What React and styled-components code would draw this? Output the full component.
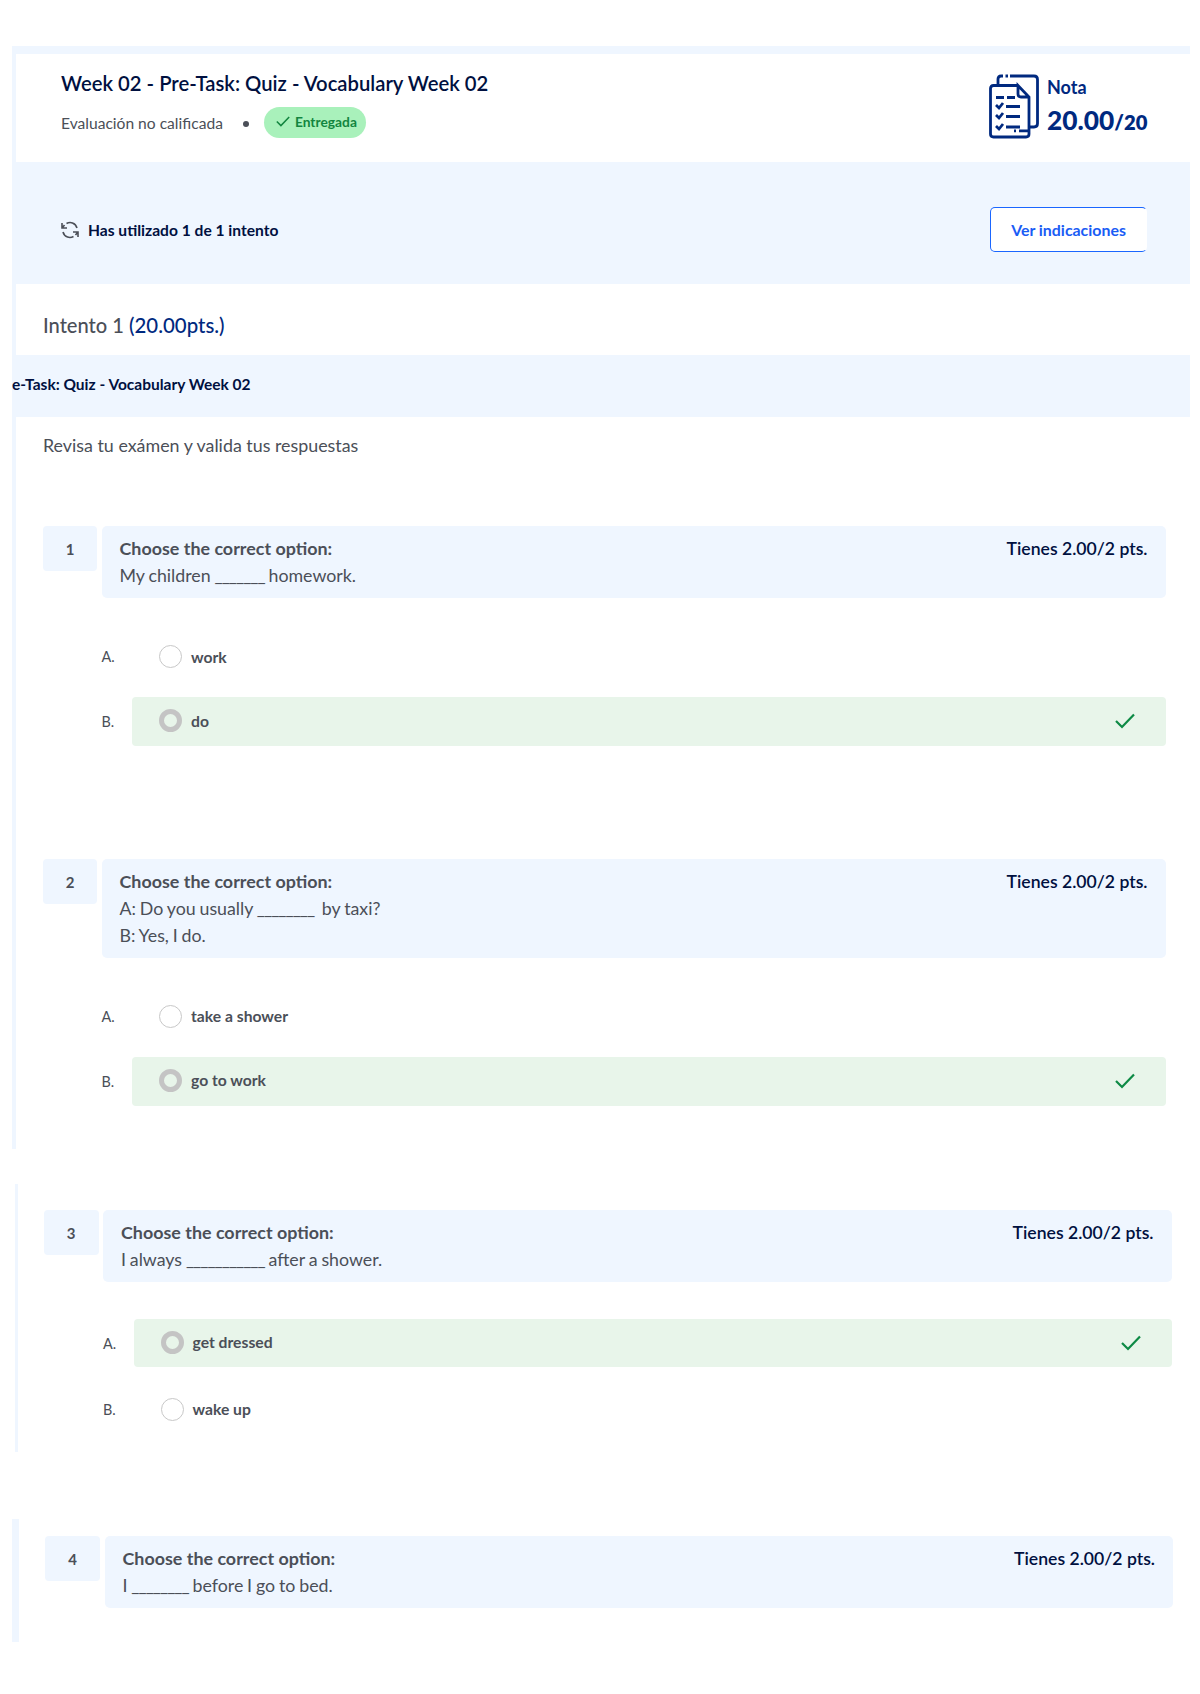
import React from 'react'
import styled, { createGlobalStyle } from 'styled-components'

const GlobalStyle = createGlobalStyle`
* { box-sizing: border-box; }
body {
  margin: 0;
  background: #ffffff;
  font-family: Lato, "Liberation Sans", sans-serif;
  color: #4b4f58;
}
h1, h2, p { margin: 0; font-weight: 400; }
`

const Page = styled.main`
width: 1200px;
height: 1694px;
padding-top: 46px;
overflow: hidden;
`

const Sheet = styled.section`
width: ${p => p.$width}px;
height: ${p => p.$height}px;
margin-left: ${p => p.$left}px;
margin-bottom: ${p => p.$after}px;
border-left: ${p => p.$edge}px solid #eff6ff;
`

const Header = styled.header`
display: flex;
justify-content: space-between;
height: 116px;
padding: 14px 43px 0 45px;
border-top: 8px solid #eff6ff;
background: white;
`

const Title = styled.h1`
font-size: 20.25px;
line-height: 30px;
font-weight: 600;
color: #00103f;
white-space: nowrap;
`

const Meta = styled.div`
display: flex;
align-items: center;
height: 31px;
margin-top: 9px;
font-size: 15.6px;
white-space: nowrap;
`

const Dot = styled.span`
width: 6px;
height: 6px;
margin: 2px 15px 0 20px;
border-radius: 50%;
background: #4b4f58;
`

const Badge = styled.span`
display: flex;
align-items: center;
gap: 5px;
width: 102px;
height: 31px;
padding: 0 0 2px 12px;
border-radius: 16px;
background: #a9f1bb;
color: #12853f;
font-size: 13.8px;
font-weight: 700;
`

const Score = styled.div`
display: flex;
gap: 8px;
margin-top: 6px;
color: #00297f;
white-space: nowrap;
`

const ScoreText = styled.div`
width: 100px;
padding-top: 1px;
font-size: 18px;
font-weight: 700;
line-height: 24px;
`

const ScoreValue = styled.div`
font-size: 20.2px;
font-weight: 800;
line-height: 32px;
margin-top: 5px;

strong {
  font-size: 26.3px;
  font-weight: 900;
}
`

const Attempts = styled.div`
display: flex;
align-items: center;
justify-content: space-between;
height: 122px;
padding: 13px 43px 0 45px;
background: #eff6ff;
`

const AttemptsText = styled.div`
display: flex;
align-items: center;
gap: 9px;
font-size: 15.6px;
font-weight: 700;
color: #00103f;
`

const OutlineButton = styled.button`
width: 157px;
height: 45px;
padding: 0;
border: 1.5px solid #1a66ff;
border-right-color: transparent;
border-radius: 5px;
background: white;
color: #1a5cf5;
font-family: inherit;
font-size: 15.9px;
font-weight: 700;
`

const AttemptTitle = styled.h2`
height: 71px;
padding: 12px 0 0 27px;
font-size: 20.1px;
font-weight: 500;
line-height: 58px;

span {
  color: #00297f;
  font-size: 20.4px;
}
`

const Crumb = styled.div`
height: 62px;
margin-left: -4px;
background: #eff6ff;
color: #00103f;
font-size: 15.5px;
font-weight: 700;
line-height: 59px;
white-space: nowrap;
`

const Intro = styled.p`
height: 109px;
padding: 13px 0 0 27px;
font-size: 17.850px;
line-height: 30px;
`

const Question = styled.article`
display: flex;
gap: 4.5px;
margin-left: ${p => p.$left}px;
padding-top: ${p => p.$top || 0}px;
`

const Number = styled.div`
flex: none;
width: ${p => p.$width || 54}px;
height: 45px;
border-radius: 4px;
background: #eff6ff;
font-size: 15px;
font-weight: 700;
line-height: 46px;
text-align: center;
`

const QuestionBody = styled.div`
width: ${p => p.$width}px;
`

const Prompt = styled.div`
display: flex;
justify-content: space-between;
height: ${p => p.$height}px;
padding: 9px 18px 0;
border-radius: 5px;
background: #eff6ff;
font-size: 17.8px;
line-height: 27px;
white-space: pre;

b {
  font-size: 17.9px;
  font-weight: 700;
}
p { word-spacing: -0.7px; }
`

const Blank = styled.span`
letter-spacing: -1px;
`

const Points = styled.div`
color: #00103f;
font-size: 17.6px;
font-weight: 600;
`

const Option = styled.div`
display: flex;
align-items: center;
height: ${p => p.$height}px;
margin-top: ${p => p.$gap}px;
font-size: 14.4px;
`

const Letter = styled.span`
width: 30.5px;
`

const Answer = styled.div`
flex: 1;
display: flex;
align-items: center;
height: 100%;
padding: 0 31px ${p => (p.$correct ? 2 : 0)}px 27px;
border-radius: 4px;
background: ${p => (p.$correct ? '#e8f5ea' : 'transparent')};
font-size: 15.7px;
font-weight: 700;

svg {
  margin-left: auto;
  margin-top: 1px;
}
`

const Radio = styled.span`
width: 23px;
height: 23px;
margin-right: 9px;
border: ${p => (p.$checked ? '5.5px solid #c4c4c4' : '1px solid #c8c8c8')};
border-radius: 50%;
`

function Tick({ width = 20, height = 16, color = '#0d8a45' }) {
  return (
    <svg width={width} height={height} viewBox="0 0 20 16" fill="none" stroke={color} strokeWidth="2.200">
      <path d="M1 8 7 14 19 1.500" />
    </svg>
  )
}

function RefreshIcon() {
  return (
    <svg width="18" height="18" viewBox="0 0 18 18" fill="none" stroke="#4b4f58" strokeWidth="1.600">
      <path d="M1 2v5h5M1.500 6.500 3.500 4M5.500 2.500C9 .500 14.500 1.500 16 7" />
      <path d="M17 16v-5h-5M16.500 11.500 14.500 14M12.500 15.500C9 17.500 3.500 16.500 2 11" />
    </svg>
  )
}

function PapersIcon() {
  return (
    <svg width="50" height="65" viewBox="0 0 50 65" fill="none" stroke="#00297f" strokeWidth="2.800">
      <path d="M9 11V5q0-3 3-3h2M16.500 2h2.500M21 2h24q3.500 0 3.500 3.500V49.500q0 3.500-3.500 3.500h-4" />
      <path d="M29 11.500H4.500q-3 0-3 3V60q0 3 3 3h32.500q3 0 3-3V23L29 11.500V20q0 3 3 3h8" />
      <path d="M7 23.500h8M18 23.500h8M17 32.500h14M17 42.500h14M17 53h14M25 56.800h2M30 56.800h10" />
      <path d="m7 31 3 3 4-5M7 41l3 3 4-5M7 52l3 3 4-5" />
    </svg>
  )
}

const questions = [
  {
    lines: ['My children _______ homework.'],
    options: [['work', false, 34], ['do', true, 16]],
  },
  {
    lines: ['A: Do you usually ________  by taxi?', 'B: Yes, I do.'],
    options: [['take a shower', false, 34], ['go to work', true, 16]],
  },
  {
    lines: ['I always ___________ after a shower.'],
    options: [['get dressed', true, 37], ['wake up', false, 18]],
    optionHeight: 48,
  },
  {
    lines: ['I ________ before I go to bed.'],
    options: [],
  },
]

// underscores are set tighter so that they join into one rule
function Line({ text }) {
  return (
    <p>
      {text.split(/(_+)/).map((part, i) => (
        part[0] === '_' ? <Blank key={i}>{part}</Blank> : part
      ))}
    </p>
  )
}

function QuestionItem({ index, left, top, width, numberWidth }) {
  const { lines, options, optionHeight = 49 } = questions[index]
  return (
    <Question $left={left} $top={top}>
      <Number $width={numberWidth}>{index + 1}</Number>
      <QuestionBody $width={width}>
        <Prompt $height={lines.length > 1 ? 98.5 : 72}>
          <div>
            <b>Choose the correct option:</b>
            {lines.map(line => <Line key={line} text={line} />)}
          </div>
          <Points>Tienes 2.00/2 pts.</Points>
        </Prompt>
        {options.map(([text, correct, gap], i) => (
          <Option key={text} $gap={gap} $height={optionHeight}>
            <Letter>{'AB'[i]}.</Letter>
            <Answer $correct={correct}>
              <Radio $checked={correct} />
              {text}
              {correct && <Tick />}
            </Answer>
          </Option>
        ))}
      </QuestionBody>
    </Question>
  )
}

export default function App() {
  return (
    <Page>
      <GlobalStyle />
      <Sheet $left={12} $width={1178} $height={1103} $edge={4} $after={35}>
        <Header>
          <div>
            <Title>Week 02 - Pre-Task: Quiz - Vocabulary Week 02</Title>
            <Meta>
              Evaluación no calificada
              <Dot />
              <Badge><Tick width={14} height={11} color="#12853f" />Entregada</Badge>
            </Meta>
          </div>
          <Score>
            <PapersIcon />
            <ScoreText>
              Nota
              <ScoreValue><strong>20.00</strong>/20</ScoreValue>
            </ScoreText>
          </Score>
        </Header>
        <Attempts>
          <AttemptsText><RefreshIcon />Has utilizado 1 de 1 intento</AttemptsText>
          <OutlineButton>Ver indicaciones</OutlineButton>
        </Attempts>
        <AttemptTitle>Intento 1 <span>(20.00pts.)</span></AttemptTitle>
        <Crumb>e-Task: Quiz - Vocabulary Week 02</Crumb>
        <Intro>Revisa tu exámen y valida tus respuestas</Intro>
        <QuestionItem index={0} left={27} width={1064} />
        <QuestionItem index={1} left={27} top={113} width={1064} />
      </Sheet>
      <Sheet $left={14.5} $width={1175} $height={268} $edge={3} $after={67}>
        <QuestionItem index={2} left={26} top={26} width={1068.5} numberWidth={55} />
      </Sheet>
      <Sheet $left={12} $width={1178} $height={123} $edge={7} $after={0}>
        <QuestionItem index={3} left={26} top={17} width={1068.5} numberWidth={55} />
      </Sheet>
    </Page>
  )
}
